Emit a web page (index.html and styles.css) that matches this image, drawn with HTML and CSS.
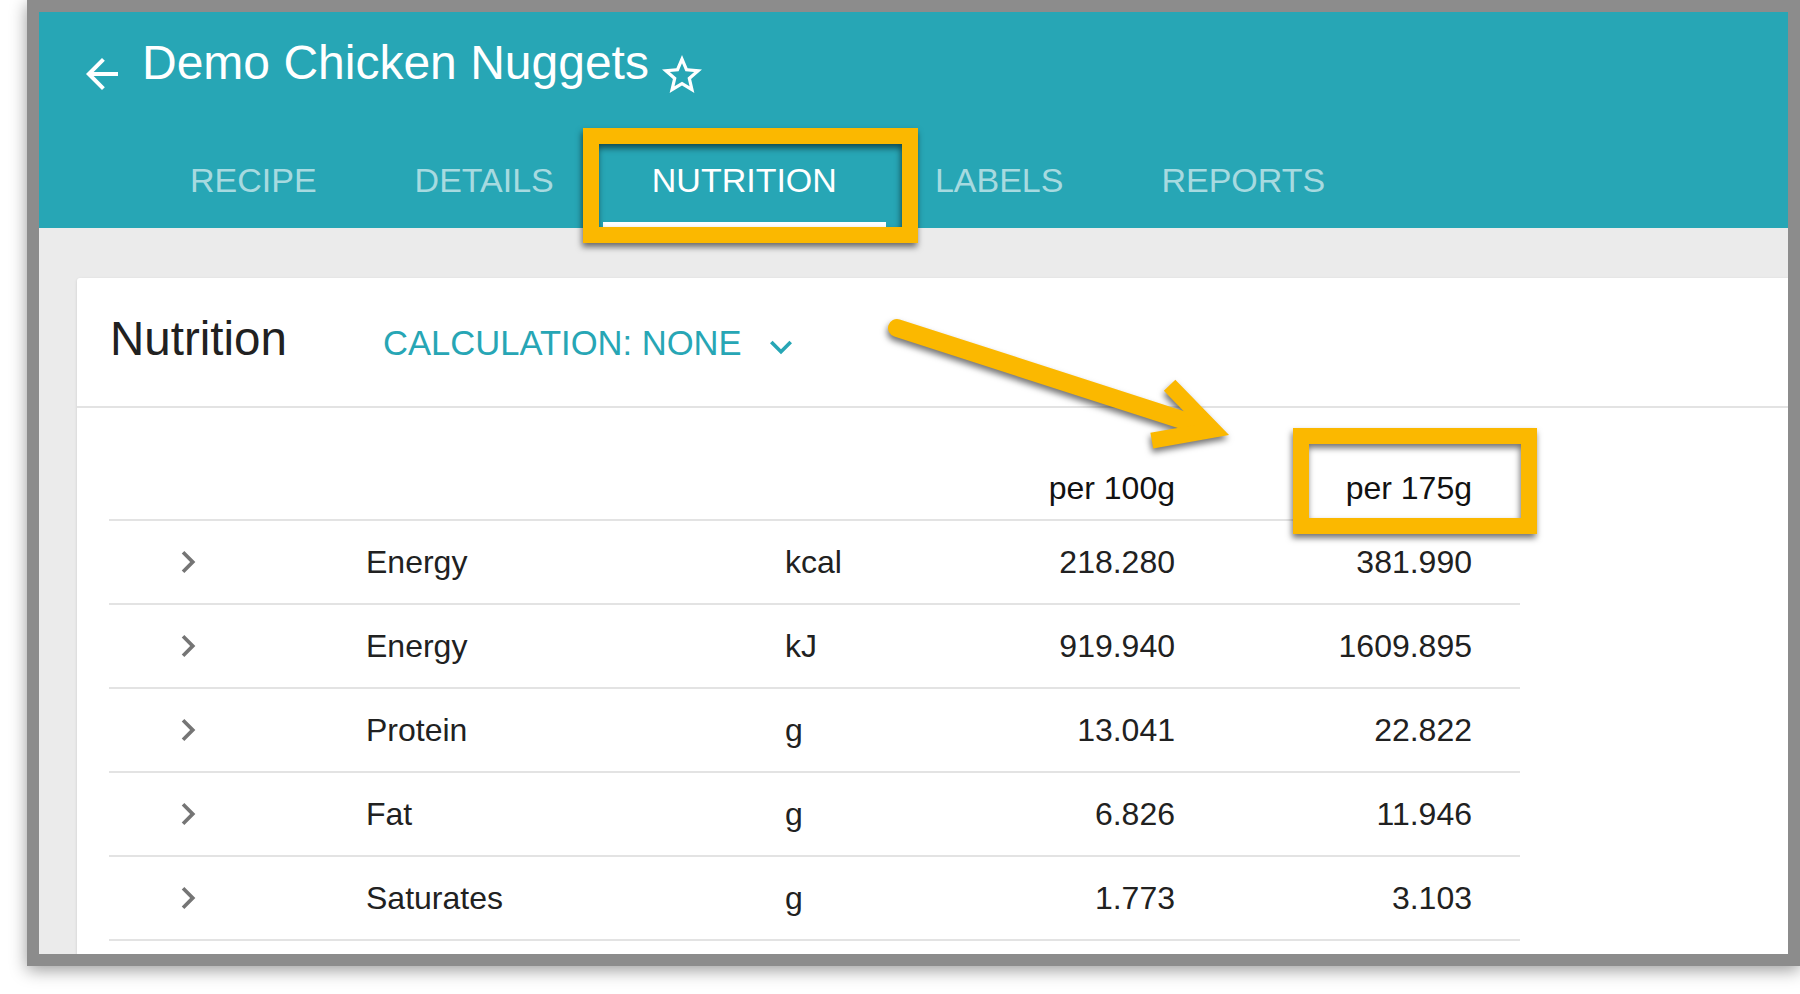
FILE: index.html
```html
<!DOCTYPE html>
<html lang="en">
<head>
<meta charset="utf-8">
<title>Demo Chicken Nuggets – Nutrition</title>
<link rel="stylesheet" href="styles.css">
</head>
<body>
<div class="frame">
  <header class="appbar">
    <div class="title-row">
      <svg class="back" viewBox="0 0 24 24" width="48" height="48"><path d="M20 11H7.83l5.59-5.59L12 4l-8 8 8 8 1.41-1.41L7.83 13H20v-2z"/></svg>
      <h1 class="title">Demo Chicken Nuggets</h1>
      <svg class="star" viewBox="0 0 24 24" width="48" height="48"><path d="M22 9.24l-7.19-.62L12 2 9.19 8.63 2 9.24l5.46 4.73L5.82 21 12 17.27 18.18 21l-1.63-7.03L22 9.24zM12 15.4l-3.760 2.270 1-4.280-3.320-2.880 4.380-.380L12 6.100l1.710 4.040 4.380.380-3.320 2.880 1 4.280L12 15.4z"/></svg>
    </div>
    <nav class="tabs">
      <span class="tab">RECIPE</span>
      <span class="tab">DETAILS</span>
      <span class="tab active">NUTRITION</span>
      <span class="tab">LABELS</span>
      <span class="tab">REPORTS</span>
    </nav>
  </header>
  <main class="content">
    <section class="card">
      <div class="card-head">
        <h2 class="card-title">Nutrition</h2>
        <span class="calc">CALCULATION: NONE<svg class="caret" viewBox="0 0 24 24" width="44" height="44"><path d="M16.59 8.59L12 13.170 7.41 8.59 6 10l6 6 6-6z"/></svg></span>
      </div>
      <div class="table">
        <div class="thead">
          <span></span><span></span><span></span>
          <span class="num">per 100g</span>
          <span class="num">per 175g</span>
          <span></span>
        </div>
        <div class="row">
          <svg class="chev" viewBox="0 0 24 24" width="44" height="44"><path d="M10 6L8.59 7.41 13.17 12l-4.58 4.59L10 18l6-6z"/></svg>
          <span>Energy</span><span>kcal</span><span class="num">218.280</span><span class="num">381.990</span><span></span>
        </div>
        <div class="row">
          <svg class="chev" viewBox="0 0 24 24" width="44" height="44"><path d="M10 6L8.59 7.41 13.17 12l-4.58 4.59L10 18l6-6z"/></svg>
          <span>Energy</span><span>kJ</span><span class="num">919.940</span><span class="num">1609.895</span><span></span>
        </div>
        <div class="row">
          <svg class="chev" viewBox="0 0 24 24" width="44" height="44"><path d="M10 6L8.59 7.41 13.17 12l-4.58 4.59L10 18l6-6z"/></svg>
          <span>Protein</span><span>g</span><span class="num">13.041</span><span class="num">22.822</span><span></span>
        </div>
        <div class="row">
          <svg class="chev" viewBox="0 0 24 24" width="44" height="44"><path d="M10 6L8.59 7.41 13.17 12l-4.58 4.59L10 18l6-6z"/></svg>
          <span>Fat</span><span>g</span><span class="num">6.826</span><span class="num">11.946</span><span></span>
        </div>
        <div class="row">
          <svg class="chev" viewBox="0 0 24 24" width="44" height="44"><path d="M10 6L8.59 7.41 13.17 12l-4.58 4.59L10 18l6-6z"/></svg>
          <span>Saturates</span><span>g</span><span class="num">1.773</span><span class="num">3.103</span><span></span>
        </div>
      </div>
    </section>
  </main>
</div>
<svg class="annot" width="1800" height="994" viewBox="0 0 1800 994">
  <g fill="none" stroke="#fbb800">
    <rect x="591" y="136" width="319" height="99" stroke-width="16"/>
    <rect x="1301" y="436" width="228" height="90" stroke-width="16"/>
    <line x1="897" y1="328" x2="1207" y2="428" stroke-width="18" stroke-linecap="round"/>
    <polyline points="1169.6,385.3 1212.8,429.8 1151.8,440.7" stroke-width="16" stroke-linejoin="miter" stroke-miterlimit="10"/>
  </g>
</svg>
</body>
</html>
```

FILE: styles.css
```css
html, body {
  margin: 0;
  padding: 0;
}
body {
  position: relative;
  width: 1800px;
  height: 994px;
  overflow: hidden;
  background: #ffffff;
  font-family: "Liberation Sans", Arial, sans-serif;
}
.frame {
  margin-left: 27px;
  width: 1773px;
  height: 966px;
  box-sizing: border-box;
  border: 12px solid #8c8c8c;
  overflow: hidden;
  background: #ebebeb;
  box-shadow: 0 4px 16px rgba(0, 0, 0, 0.4);
}
.appbar {
  height: 216px;
  background: #27a6b5;
  display: flex;
  flex-direction: column;
  justify-content: space-between;
}
.title-row {
  display: flex;
  align-items: flex-start;
  padding: 27px 0 0 39px;
  color: #fff;
}
.back {
  fill: #fff;
  margin-top: 11px;
  flex: none;
}
.title {
  margin: 0 0 0 16px;
  font-size: 48px;
  line-height: 48px;
  font-weight: 400;
  color: #fff;
}
.star {
  fill: #fff;
  margin: 12px 0 0 9px;
  flex: none;
}
.tabs {
  display: flex;
  height: 96px;
  padding-left: 102px;
}
.tab {
  padding: 0 49px;
  font-size: 34px;
  line-height: 96px;
  color: rgba(255, 255, 255, 0.6);
  white-space: nowrap;
}
.tab.active {
  color: #fff;
  box-shadow: inset 0 -6px 0 #fff;
}
.content {
  padding: 50px 0 0 38px;
}
.card {
  background: #fff;
  margin-right: -40px;
  height: 760px;
  border-radius: 3px 0 0 0;
  box-shadow: 0 1px 3px rgba(0, 0, 0, 0.14);
}
.card-head {
  height: 130px;
  box-sizing: border-box;
  padding: 38px 0 0 33px;
  display: flex;
  align-items: baseline;
  border-bottom: 2px solid #e3e3e3;
}
.card-title {
  margin: 0;
  width: 273px;
  flex: none;
  font-size: 47.5px;
  line-height: 46px;
  font-weight: 400;
  color: #212121;
}
.calc {
  font-size: 34.6px;
  line-height: 34px;
  color: #27a6b5;
  white-space: nowrap;
}
.caret {
  fill: #27a6b5;
  vertical-align: -14px;
  margin-left: 17px;
}
.table {
  margin-left: 32px;
  width: 1411px;
  font-size: 32px;
  color: #212121;
}
.thead,
.row {
  display: grid;
  grid-template-columns: 257px 419px 190px 200px 297px 48px;
  box-sizing: border-box;
  border-bottom: 2px solid #e3e3e3;
}
.thead {
  height: 113px;
  align-items: end;
  padding-bottom: 12px;
  color: #111;
}
.row {
  height: 84px;
  align-items: center;
}
.num {
  text-align: right;
}
.chev {
  fill: #757575;
  margin-left: 57px;
}
.annot {
  position: absolute;
  left: 0;
  top: 0;
  pointer-events: none;
  filter: drop-shadow(-1px 4px 3px rgba(0, 0, 0, 0.55));
}
```
